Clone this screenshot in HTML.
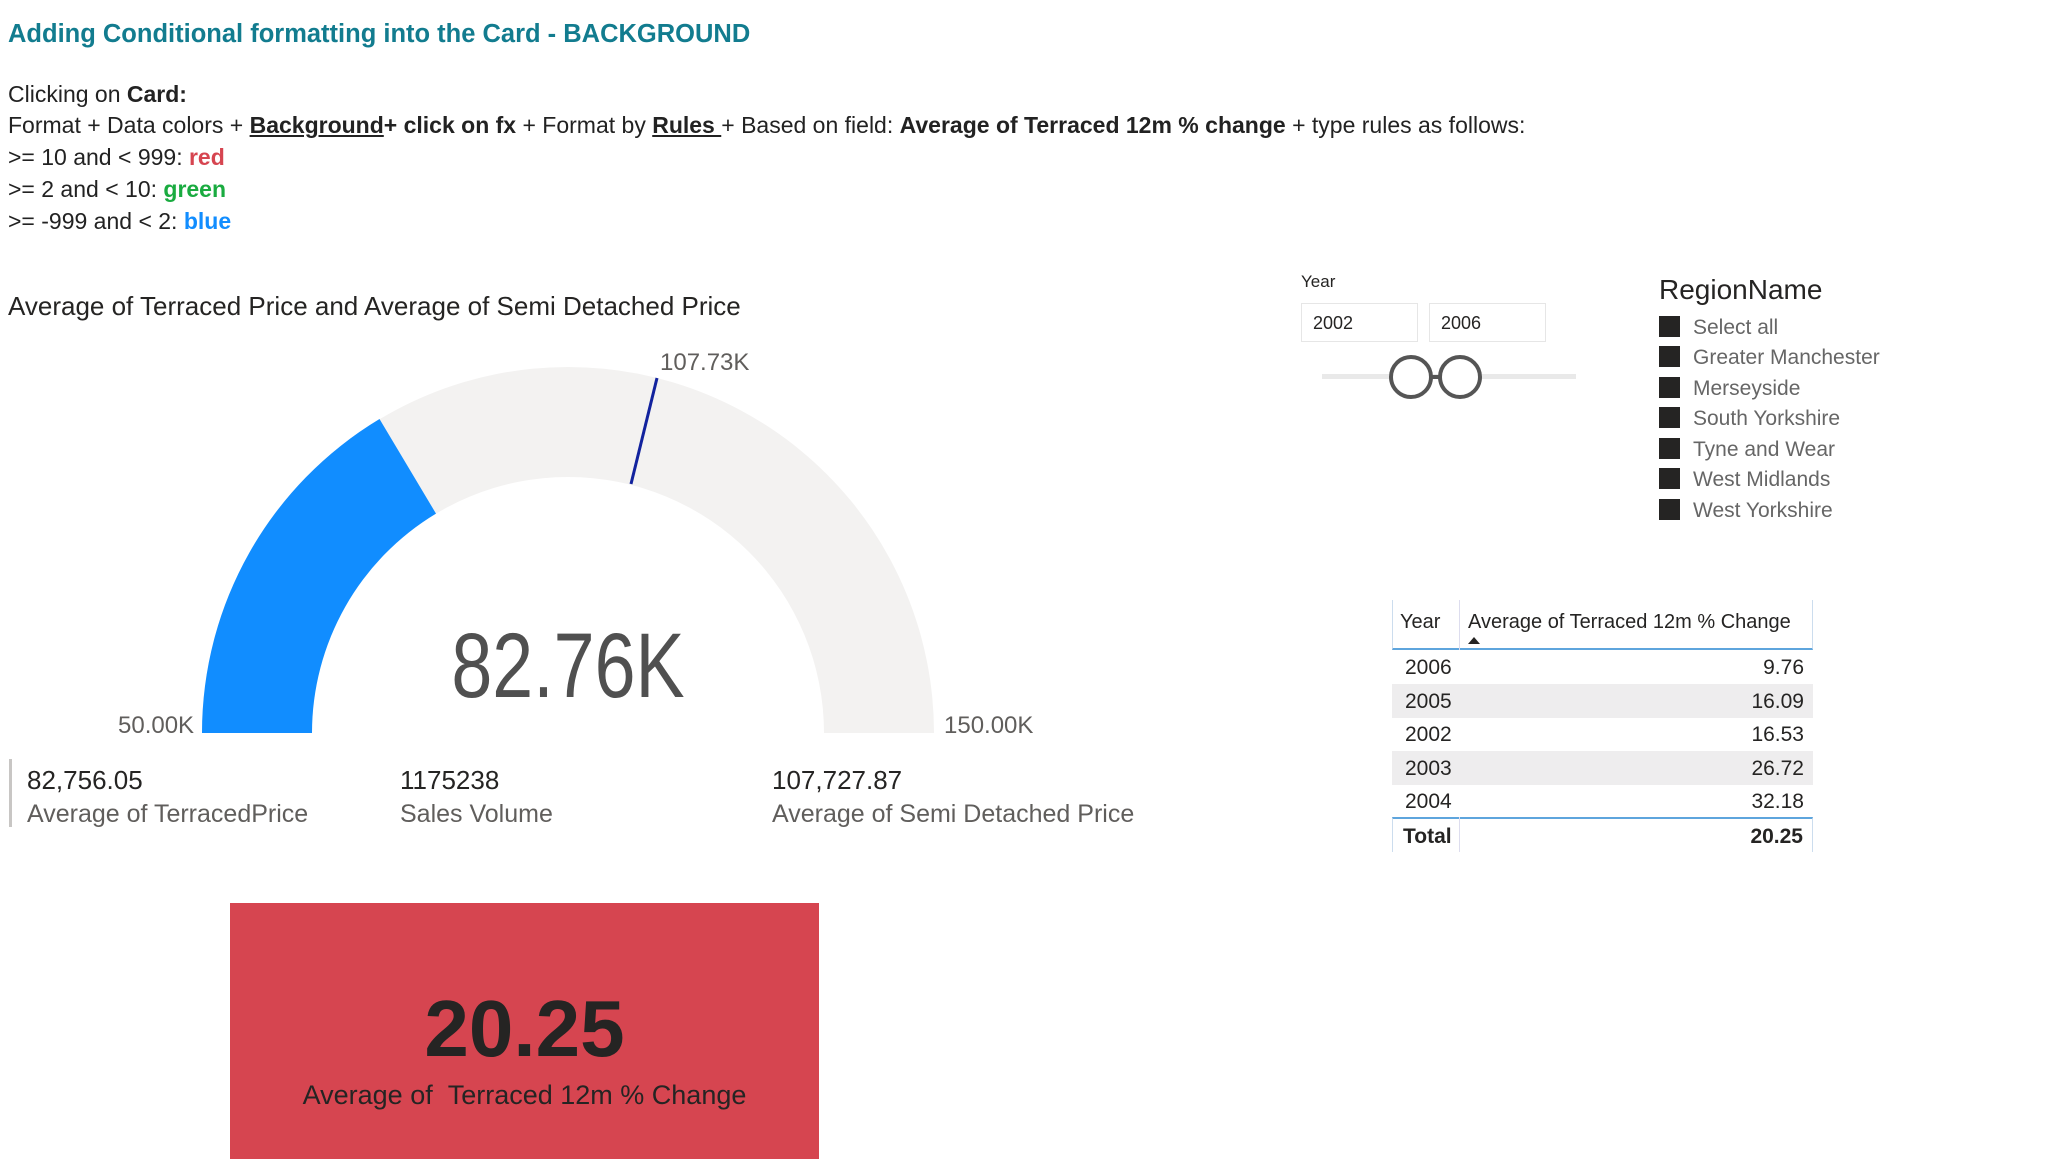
<!DOCTYPE html>
<html><head><meta charset="utf-8"><style>
body{margin:0;width:2048px;height:1168px;background:#fff;position:relative;overflow:hidden;font-family:"Liberation Sans",sans-serif;}
.a{position:absolute;white-space:nowrap;}
.t{font-size:23px;color:#222;}
.reg{font-size:21px;color:#666;}
.cb{position:absolute;width:21px;height:21px;background:#252423;left:1659px;}
.row{position:absolute;left:1392px;width:421px;height:33.6px;font-size:21px;color:#252423;}
.row span{position:absolute;top:6px;}
</style></head><body>
<div class="a" style="left:8px;top:20px;font-size:25.5px;font-weight:bold;color:#127c8f;">Adding Conditional formatting into the Card - BACKGROUND</div>
<div class="a t" style="left:8px;top:81px;">Clicking on <b>Card:</b></div>
<div class="a t" style="left:8px;top:112px;">Format + Data colors + <b><u>Background</u>+ click on fx</b> + Format by <b><u>Rules </u></b>+ Based on field: <b>Average of Terraced 12m % change</b> + type rules as follows:</div>
<div class="a t" style="left:8px;top:144px;">&gt;= 10 and &lt; 999: <b style="color:#d64550">red</b></div>
<div class="a t" style="left:8px;top:176px;">&gt;= 2 and &lt; 10: <b style="color:#1aab40">green</b></div>
<div class="a t" style="left:8px;top:208px;">&gt;= -999 and &lt; 2: <b style="color:#118dff">blue</b></div>
<div class="a" style="left:8px;top:291px;font-size:26px;color:#252423;">Average of Terraced Price and Average of Semi Detached Price</div>
<svg class="a" style="left:0;top:0" width="1000" height="760">
<path d="M202 733 A366 366 0 0 1 934 733 L824 733 A256 256 0 0 0 312 733 Z" fill="#f3f2f1"/>
<path d="M202 733 A366 366 0 0 1 379.5 419 L436 513.6 A256 256 0 0 0 312 733 Z" fill="#118dff"/>
<line x1="657" y1="378" x2="631" y2="484" stroke="#12239e" stroke-width="3"/>
</svg>
<div class="a" style="left:660px;top:349px;font-size:24px;color:#605e5c;">107.73K</div>
<div class="a" style="left:118px;top:712px;font-size:24px;color:#605e5c;">50.00K</div>
<div class="a" style="left:944px;top:712px;font-size:24px;color:#605e5c;">150.00K</div>
<div class="a" style="left:568px;top:614px;transform:translateX(-50%) scaleX(0.8);font-size:92px;color:#505050;">82.76K</div>
<div class="a" style="left:9px;top:759px;width:3px;height:68px;background:#c8c6c4;"></div>
<div class="a" style="left:27px;top:765px;font-size:26px;color:#252423;">82,756.05</div>
<div class="a" style="left:27px;top:800px;font-size:25px;color:#605e5c;">Average of TerracedPrice</div>
<div class="a" style="left:400px;top:765px;font-size:26px;color:#252423;">1175238</div>
<div class="a" style="left:400px;top:800px;font-size:25px;color:#605e5c;">Sales Volume</div>
<div class="a" style="left:772px;top:765px;font-size:26px;color:#252423;">107,727.87</div>
<div class="a" style="left:772px;top:800px;font-size:25px;color:#605e5c;">Average of Semi Detached Price</div>
<div class="a" style="left:230px;top:903px;width:589px;height:256px;background:#d64550;">
<div class="a" style="left:0;width:589px;top:80px;text-align:center;font-size:80px;font-weight:bold;color:#252423;">20.25</div>
<div class="a" style="left:0;width:589px;top:177px;text-align:center;font-size:27px;color:#252423;">Average of &nbsp;Terraced 12m % Change</div>
</div>
<div class="a" style="left:1301px;top:272px;font-size:17px;color:#252423;">Year</div>
<div class="a" style="left:1301px;top:303px;width:117px;height:39px;border:1px solid #e6e6e6;box-sizing:border-box;font-size:18px;color:#252423;padding:9px 0 0 11px;">2002</div>
<div class="a" style="left:1429px;top:303px;width:117px;height:39px;border:1px solid #e6e6e6;box-sizing:border-box;font-size:18px;color:#252423;padding:9px 0 0 11px;">2006</div>
<div class="a" style="left:1322px;top:374px;width:254px;height:5px;background:#e9e9e9;"></div>
<div class="a" style="left:1420px;top:375px;width:30px;height:4px;background:#555;"></div>
<div class="a" style="left:1389px;top:355px;width:36px;height:36px;border:4px solid #555;border-radius:50%;background:#fff;"></div>
<div class="a" style="left:1438px;top:355px;width:36px;height:36px;border:4px solid #555;border-radius:50%;background:#fff;"></div>
<div class="a" style="left:1659px;top:274px;font-size:28px;color:#252423;">RegionName</div>
<div class="cb" style="top:316px"></div><div class="a reg" style="left:1693px;top:316px;">Select all</div>
<div class="cb" style="top:346px"></div><div class="a reg" style="left:1693px;top:346px;">Greater Manchester</div>
<div class="cb" style="top:377px"></div><div class="a reg" style="left:1693px;top:377px;">Merseyside</div>
<div class="cb" style="top:407px"></div><div class="a reg" style="left:1693px;top:407px;">South Yorkshire</div>
<div class="cb" style="top:438px"></div><div class="a reg" style="left:1693px;top:438px;">Tyne and Wear</div>
<div class="cb" style="top:468px"></div><div class="a reg" style="left:1693px;top:468px;">West Midlands</div>
<div class="cb" style="top:499px"></div><div class="a reg" style="left:1693px;top:499px;">West Yorkshire</div>
<div class="a" style="left:1392px;top:600px;width:421px;height:50px;border-left:1px solid #ccddee;border-right:1px solid #ccddee;border-bottom:2px solid #5ea5dd;box-sizing:border-box;"></div>
<div class="a" style="left:1459px;top:600px;width:1px;height:50px;background:#dde;"></div>
<div class="a" style="left:1400px;top:611px;font-size:20px;color:#252423;">Year</div>
<div class="a" style="left:1468px;top:611px;font-size:20px;color:#252423;">Average of Terraced 12m % Change</div>
<div class="a" style="left:1468px;top:637px;width:0;height:0;border-left:6px solid transparent;border-right:6px solid transparent;border-bottom:7px solid #252423;"></div>
<div class="row" style="top:650px;"><span style="left:13px">2006</span><span style="right:9px">9.76</span></div>
<div class="row" style="top:684px;background:#eeedee"><span style="left:13px">2005</span><span style="right:9px">16.09</span></div>
<div class="row" style="top:717px;"><span style="left:13px">2002</span><span style="right:9px">16.53</span></div>
<div class="row" style="top:751px;background:#eeedee"><span style="left:13px">2003</span><span style="right:9px">26.72</span></div>
<div class="row" style="top:784px;"><span style="left:13px">2004</span><span style="right:9px">32.18</span></div>
<div class="a" style="left:1392px;top:817px;width:421px;height:35px;border-top:2px solid #5ea5dd;border-left:1px solid #ccddee;border-right:1px solid #ccddee;box-sizing:border-box;font-size:21px;font-weight:bold;color:#252423;">
<span style="position:absolute;left:10px;top:6px">Total</span><span style="position:absolute;right:9px;top:6px">20.25</span></div>
<div class="a" style="left:1459px;top:817px;width:1px;height:35px;background:#dde;"></div>
</body></html>
